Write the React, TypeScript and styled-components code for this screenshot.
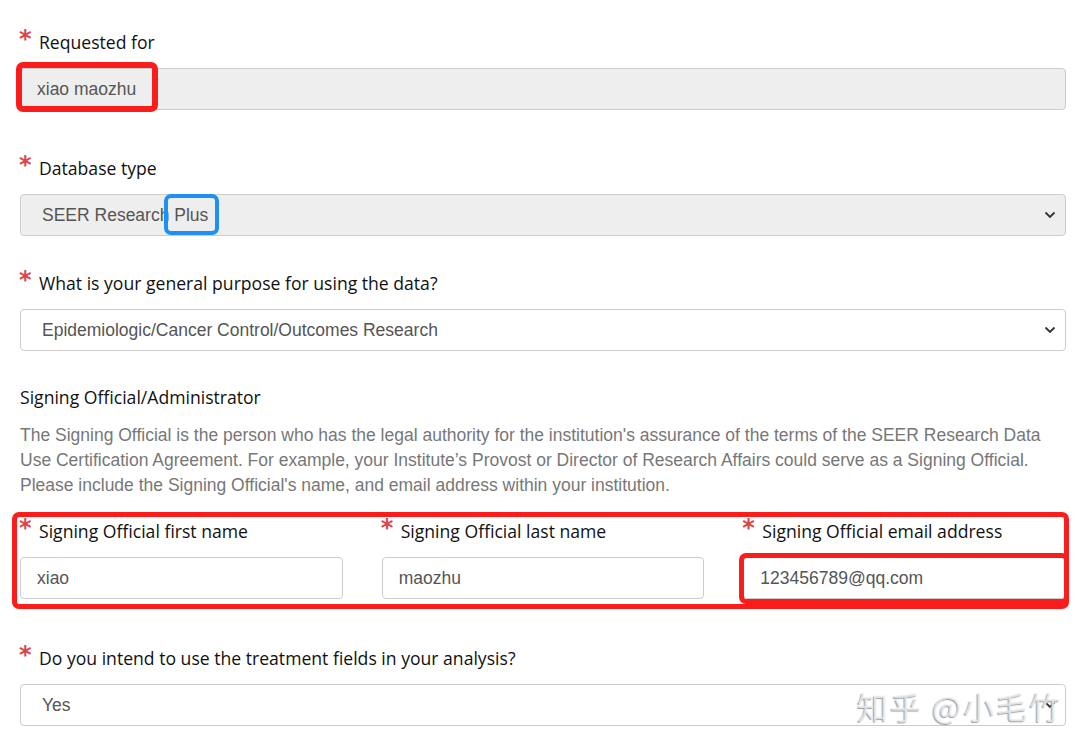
import styled, { createGlobalStyle } from 'styled-components';

const GlobalStyle = createGlobalStyle`
  html, body {
    margin: 0;
    padding: 0;
    background: #ffffff;
  }
  * { box-sizing: border-box; }
`;

const Page = styled.div`
  position: relative;
  width: 1088px;
  height: 748px;
  overflow: hidden;
  padding: 30px 22px 0 20px;
  font-family: 'Open Sans', 'Noto Sans', sans-serif;
`;

const Field = styled.div<{ $gap: number }>`
  display: flex;
  flex-direction: column;
  margin-bottom: ${(p) => p.$gap}px;
`;

const Label = styled.div`
  display: flex;
  align-items: center;
  height: 24px;
  margin-bottom: 14px;
  font-size: 17.6px;
  color: #111111;
  white-space: nowrap;
`;

const Star = styled.span`
  display: inline-block;
  width: 19px;
  color: #dd4646;
  font-family: 'DejaVu Sans', sans-serif;
  font-weight: bold;
  font-size: 24px;
  line-height: 1;
  position: relative;
  top: -3px;
  left: -1px;
`;

const Box = styled.div<{ $disabled?: boolean; $select?: boolean }>`
  position: relative;
  display: flex;
  align-items: center;
  justify-content: space-between;
  height: 42px;
  padding-left: ${(p) => (p.$select ? 21 : 16)}px;
  padding-right: 9px;
  border: 1px solid #cccccc;
  border-radius: 4px;
  background: ${(p) => (p.$disabled ? '#eeeeee' : '#ffffff')};
  font-family: 'Liberation Sans', Arial, sans-serif;
  font-size: 17.5px;
  color: #555555;
`;

const Chevron = () => (
  <svg width="12" height="8" viewBox="0 0 12 8">
    <path d="M1.5 1.5 L6 6 L10.5 1.5" fill="none" stroke="#333" strokeWidth="1.8" />
  </svg>
);

const Heading = styled.div`
  font-size: 17.6px;
  height: 24px;
  line-height: 24px;
  color: #111111;
  margin-bottom: 14px;
`;

const Help = styled.p`
  margin: 0 0 21px 0;
  font-family: 'Liberation Sans', Arial, sans-serif;
  font-size: 17.5px;
  line-height: 25px;
  color: #777777;
  white-space: nowrap;
`;

const Row = styled.div`
  position: relative;
  display: grid;
  grid-template-columns: 1fr 1fr 1fr;
  column-gap: 39px;
  margin-bottom: 47px;
`;

const Mark = styled.div<{ $color: string; $w: number }>`
  position: absolute;
  border: ${(p) => p.$w}px solid ${(p) => p.$color};
  border-radius: 7px;
  pointer-events: none;
`;

const Value = styled.span`
  position: relative;
`;

const Watermark = styled.div`
  position: absolute;
  left: 857px;
  top: 683px;
  font-family: 'Noto Sans CJK SC', sans-serif;
  font-size: 31px;
  letter-spacing: 2px;
  color: rgba(240, 240, 240, 0.8);
  text-shadow: -1px 1px 1px #a0a0a0;
  pointer-events: none;
`;

const Req = ({ children }: { children: string }) => (
  <Label>
    <Star>*</Star>
    {children}
  </Label>
);

export default function App() {
  return (
    <>
      <GlobalStyle />
      <Page>
        <Field $gap={46}>
          <Req>Requested for</Req>
          <Box $disabled>
            <span>xiao maozhu</span>
            <Mark $color="#fb1c1c" $w={6} style={{ left: -5, top: -7, width: 142, height: 50 }} />
          </Box>
        </Field>

        <Field $gap={35}>
          <Req>Database type</Req>
          <Box $disabled $select>
            <Value>
              SEER Research Plus
              <Mark $color="#1e90f5" $w={4} style={{ left: 122, top: -11, width: 55, height: 41 }} />
            </Value>
            <Chevron />
          </Box>
        </Field>

        <Field $gap={34}>
          <Req>What is your general purpose for using the data?</Req>
          <Box $select>
            <span>Epidemiologic/Cancer Control/Outcomes Research</span>
            <Chevron />
          </Box>
        </Field>

        <Heading>Signing Official/Administrator</Heading>
        <Help>
          The Signing Official is the person who has the legal authority for the institution's assurance of the terms of the SEER Research Data
          <br />
          Use Certification Agreement. For example, your Institute’s Provost or Director of Research Affairs could serve as a Signing Official.
          <br />
          Please include the Signing Official's name, and email address within your institution.
        </Help>

        <Row>
          <Field $gap={0}>
            <Req>Signing Official first name</Req>
            <Box>xiao</Box>
          </Field>
          <Field $gap={0}>
            <Req>Signing Official last name</Req>
            <Box>maozhu</Box>
          </Field>
          <Field $gap={0}>
            <Req>Signing Official email address</Req>
            <Box>
              123456789@qq.com
              <Mark $color="#fb1c1c" $w={5} style={{ left: -5, top: -5, width: 330, height: 51 }} />
            </Box>
          </Field>
          <Mark $color="#fb1c1c" $w={5} style={{ left: -8, top: -7, width: 1057, height: 97 }} />
        </Row>

        <Field $gap={0}>
          <Req>Do you intend to use the treatment fields in your analysis?</Req>
          <Box $select>
            <span>Yes</span>
            <Chevron />
          </Box>
        </Field>

        <Watermark>知乎 @小毛竹</Watermark>
      </Page>
    </>
  );
}
